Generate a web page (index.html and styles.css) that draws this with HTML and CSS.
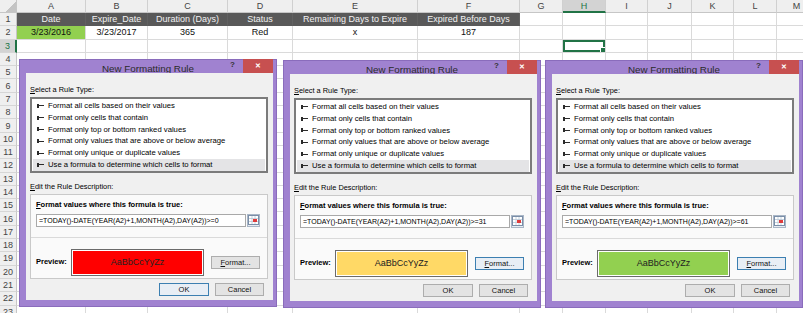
FILE: index.html
```html
<!DOCTYPE html>
<html lang="en">
<head>
<meta charset="UTF-8" />
<title>New Formatting Rule - Expiry Formulas</title>
<link rel="stylesheet" href="styles.css">
</head>
<body>

<div id="sheet" class="sheet"></div>

<div class="dialog d1">
  <div class="titlebar">
    <span></span>
    <span class="title">New Formatting Rule</span>
    <span class="controls"><span class="help">?</span><span class="close">&#x2715;</span></span>
  </div>
  <div class="body">
    <div class="label"><u>S</u>elect a Rule Type:</div>
    <ul class="rules">
      <li><i class="arrow"></i>Format all cells based on their values</li>
      <li><i class="arrow"></i>Format only cells that contain</li>
      <li><i class="arrow"></i>Format only top or bottom ranked values</li>
      <li><i class="arrow"></i>Format only values that are above or below average</li>
      <li><i class="arrow"></i>Format only unique or duplicate values</li>
      <li class="picked"><i class="arrow"></i>Use a formula to determine which cells to format</li>
    </ul>
    <div class="label label-edit"><u>E</u>dit the Rule Description:</div>
    <div class="group">
      <div class="group-top">
        <div class="bold"><u>F</u>ormat values where this formula is true:</div>
        <div class="formula-row">
          <div class="formula">=TODAY()-DATE(YEAR(A2)+1,MONTH(A2),DAY(A2))&gt;=0</div>
          <div class="ref-btn"><svg width="11" height="10" viewBox="0 0 11 10"><rect x=".5" y=".5" width="10" height="9" fill="#fff" stroke="#7a8ea8"/><path d="M1 3.5h9M1 6.5h9M4 1v8M7 1v8" stroke="#b9c6d6" stroke-width=".8"/><rect x="5" y="4" width="4" height="3" fill="#e03b3b"/></svg></div>
        </div>
      </div>
      <div class="preview-row">
        <span class="bold preview-label">Preview:</span>
        <div class="preview red">AaBbCcYyZz</div>
        <button class="btn"><u>F</u>ormat...</button>
      </div>
    </div>
    <div class="actions">
      <button class="btn ok focus">OK</button>
      <button class="btn cancel">Cancel</button>
    </div>
  </div>
</div>

<div class="dialog d2">
  <div class="titlebar">
    <span></span>
    <span class="title">New Formatting Rule</span>
    <span class="controls"><span class="help">?</span><span class="close">&#x2715;</span></span>
  </div>
  <div class="body">
    <div class="label"><u>S</u>elect a Rule Type:</div>
    <ul class="rules">
      <li><i class="arrow"></i>Format all cells based on their values</li>
      <li><i class="arrow"></i>Format only cells that contain</li>
      <li><i class="arrow"></i>Format only top or bottom ranked values</li>
      <li><i class="arrow"></i>Format only values that are above or below average</li>
      <li><i class="arrow"></i>Format only unique or duplicate values</li>
      <li class="picked"><i class="arrow"></i>Use a formula to determine which cells to format</li>
    </ul>
    <div class="label label-edit"><u>E</u>dit the Rule Description:</div>
    <div class="group">
      <div class="group-top">
        <div class="bold"><u>F</u>ormat values where this formula is true:</div>
        <div class="formula-row">
          <div class="formula">=TODAY()-DATE(YEAR(A2)+1,MONTH(A2),DAY(A2))&gt;=31</div>
          <div class="ref-btn"><svg width="11" height="10" viewBox="0 0 11 10"><rect x=".5" y=".5" width="10" height="9" fill="#fff" stroke="#7a8ea8"/><path d="M1 3.5h9M1 6.5h9M4 1v8M7 1v8" stroke="#b9c6d6" stroke-width=".8"/><rect x="5" y="4" width="4" height="3" fill="#e03b3b"/></svg></div>
        </div>
      </div>
      <div class="preview-row">
        <span class="bold preview-label">Preview:</span>
        <div class="preview yellow">AaBbCcYyZz</div>
        <button class="btn focus"><u>F</u>ormat...</button>
      </div>
    </div>
    <div class="actions">
      <button class="btn ok">OK</button>
      <button class="btn cancel">Cancel</button>
    </div>
  </div>
</div>

<div class="dialog d3">
  <div class="titlebar">
    <span></span>
    <span class="title">New Formatting Rule</span>
    <span class="controls"><span class="help">?</span><span class="close">&#x2715;</span></span>
  </div>
  <div class="body">
    <div class="label"><u>S</u>elect a Rule Type:</div>
    <ul class="rules">
      <li><i class="arrow"></i>Format all cells based on their values</li>
      <li><i class="arrow"></i>Format only cells that contain</li>
      <li><i class="arrow"></i>Format only top or bottom ranked values</li>
      <li><i class="arrow"></i>Format only values that are above or below average</li>
      <li><i class="arrow"></i>Format only unique or duplicate values</li>
      <li class="picked"><i class="arrow"></i>Use a formula to determine which cells to format</li>
    </ul>
    <div class="label label-edit"><u>E</u>dit the Rule Description:</div>
    <div class="group">
      <div class="group-top">
        <div class="bold"><u>F</u>ormat values where this formula is true:</div>
        <div class="formula-row">
          <div class="formula">=TODAY()-DATE(YEAR(A2)+1,MONTH(A2),DAY(A2))&gt;=61</div>
          <div class="ref-btn"><svg width="11" height="10" viewBox="0 0 11 10"><rect x=".5" y=".5" width="10" height="9" fill="#fff" stroke="#7a8ea8"/><path d="M1 3.5h9M1 6.5h9M4 1v8M7 1v8" stroke="#b9c6d6" stroke-width=".8"/><rect x="5" y="4" width="4" height="3" fill="#e03b3b"/></svg></div>
        </div>
      </div>
      <div class="preview-row">
        <span class="bold preview-label">Preview:</span>
        <div class="preview green">AaBbCcYyZz</div>
        <button class="btn focus"><u>F</u>ormat...</button>
      </div>
    </div>
    <div class="actions">
      <button class="btn ok">OK</button>
      <button class="btn cancel">Cancel</button>
    </div>
  </div>
</div>

<script>
  const sheet = document.getElementById('sheet');
  const letters = ['A','B','C','D','E','F','G','H','I','J','K','L','M'];
  const rowCount = 23;

  // rows 1 and 2 hold the only data on the sheet
  const data = {
    1: ['Date', 'Expire_Date', 'Duration (Days)', 'Status', 'Remaining Days to Expire', 'Expired Before Days'],
    2: ['3/23/2016', '3/23/2017', '365', 'Red', 'x', '187']
  };

  function addCell(cls, text) {
    const div = document.createElement('div');
    div.className = cls;
    if (text) div.textContent = text;
    sheet.appendChild(div);
  }

  addCell('corner');
  letters.forEach(l => addCell(l === 'H' ? 'colhead active' : 'colhead', l));

  for (let r = 1; r <= rowCount; r++) {
    addCell(r === 3 ? 'rownum active' : 'rownum', String(r));
    letters.forEach((l, i) => {
      let cls = 'cell';
      if (r === 1 && i < 6) cls += ' hdr';
      if (r === 2 && i === 0) cls += ' green-fill';
      if (r === 3 && l === 'H') cls += ' selected';
      const text = data[r] ? data[r][i] : '';
      addCell(cls, text);
    });
  }
</script>

</body>
</html>
```

FILE: styles.css
```css
html, body {
  margin: 0;
  overflow: hidden;
  background: #fff;
}

/* spreadsheet */
.sheet {
  display: grid;
  grid-template-columns: 17px 69px 62px 80px 65px 125px 102px 43px 43px 42px 44px 42px 43px 40px;
  grid-template-rows: 13px;
  grid-auto-rows: 13.3px;
  font-family: "Liberation Sans", Arial, sans-serif;
  font-size: 9px;
  color: #111;
  width: 817px;
}
.sheet > div {
  box-sizing: border-box;
  display: flex;
  align-items: center;
  justify-content: center;
  white-space: nowrap;
  overflow: hidden;
}
.corner {
  background: linear-gradient(135deg, #efefef 62%, #c4c4c4 62%);
  border-right: 1px solid #c6c6c6;
  border-bottom: 1px solid #c6c6c6;
}
.colhead {
  background: #efefef;
  color: #444;
  border-right: 1px solid #d0d0d0;
  border-bottom: 1px solid #c6c6c6;
}
.colhead.active {
  background: #d3d3d3;
  color: #217346;
  border-bottom: 2px solid #217346;
}
.rownum {
  background: #efefef;
  color: #444;
  border-right: 1px solid #c6c6c6;
  border-bottom: 1px solid #d6d6d6;
}
.rownum.active {
  background: #d3d3d3;
  color: #217346;
  border-right: 2px solid #217346;
}
.cell {
  border-right: 1px solid #dadada;
  border-bottom: 1px solid #dadada;
}
.cell.hdr {
  background: #595959;
  color: #f2f2f2;
  border-right-color: #616161;
  border-bottom-color: #595959;
}
.cell.green-fill {
  background: #92d050;
}
.cell.selected {
  position: relative;
  box-shadow: inset 0 0 0 2px #217346;
}
.cell.selected::after {
  content: "";
  position: absolute;
  right: -1px;
  bottom: -1px;
  width: 4px;
  height: 4px;
  background: #217346;
  border: 1px solid #fff;
}

/* dialogs */
.dialog {
  position: absolute;
  width: 258px;
  height: 248px;
  box-sizing: border-box;
  background: #a082d0;
  border: 1px solid #8a6cbc;
  display: flex;
  flex-direction: column;
  font-family: "Liberation Sans", Arial, sans-serif;
  font-size: 7.5px;
  color: #000;
}
.d1 { left: 19px; top: 59px; }
.d2 { left: 283px; top: 60px; }
.d3 { left: 545px; top: 60px; }

.titlebar {
  height: 13px;
  display: grid;
  grid-template-columns: 1fr auto 1fr;
  align-items: center;
}
.title {
  font-size: 9.8px;
  color: #2b2b2b;
  padding-top: 3px;
}
.controls {
  display: flex;
  justify-content: flex-end;
  align-self: start;
  margin-right: 3px;
  margin-top: -1px;
}
.help {
  font-weight: bold;
  font-size: 8px;
  color: #333;
  margin-right: 8px;
  padding-top: 1px;
}
.close {
  width: 30px;
  height: 14px;
  background: #c75050;
  color: #fff;
  font-size: 7px;
  font-weight: bold;
  display: flex;
  align-items: center;
  justify-content: center;
}

.body {
  flex: 1;
  margin: 0 3px 6px 6px;
  padding: 0 5px 0 4px;
  background: #f0f0f0;
  display: flex;
  flex-direction: column;
}
.label {
  height: 10px;
  line-height: 10px;
  margin-top: 12px;
  font-size: 7.4px;
}
.label-edit {
  margin-top: 9px;
}
u {
  text-decoration: underline;
}

.rules {
  list-style: none;
  margin: 2px 0 0;
  padding: 1px 1px 0;
  background: #fff;
  border: 2px solid #7b7b7b;
}
.rules li {
  height: 11.8px;
  line-height: 11.8px;
  padding-left: 4px;
  font-size: 7.7px;
  display: flex;
  align-items: center;
}
.rules li.picked {
  background: #e4e4e6;
}
.arrow {
  display: inline-block;
  width: 7px;
  height: 4px;
  margin-right: 4px;
  background:
    linear-gradient(#2b2b2b, #2b2b2b) 0 0 / 2px 4px no-repeat,
    linear-gradient(#2b2b2b, #2b2b2b) 2px 1.5px / 5px 1px no-repeat;
}

.group {
  margin-top: 2px;
  background: #fafafa;
  border: 1px solid #c9c9c9;
}
.group-top {
  padding: 5px 7px 10px 5px;
  border-bottom: 1px solid #dadada;
}
.bold {
  font-weight: bold;
  height: 10px;
  line-height: 10px;
}
.formula-row {
  display: flex;
  margin-top: 4px;
  height: 13px;
}
.formula {
  flex: 1;
  background: #fff;
  border: 1px solid #a9a9a9;
  font-size: 7px;
  line-height: 11px;
  padding-left: 2px;
  white-space: nowrap;
}
.ref-btn {
  width: 13px;
  margin-left: 1px;
  box-sizing: border-box;
  background: #e8edf3;
  border: 1px solid #a9b6c6;
  display: flex;
  align-items: center;
  justify-content: center;
}

.preview-row {
  display: flex;
  align-items: center;
  padding: 11px 7px 2px 5px;
}
.preview-label {
  width: 35px;
}
.preview {
  width: 133px;
  height: 27px;
  box-sizing: border-box;
  border: 1px solid #6b6b6b;
  box-shadow: inset 0 0 0 1px #fff;
  display: flex;
  align-items: center;
  justify-content: center;
  font-size: 9px;
  color: #222;
}
.preview.red { background: #ff0000; }
.preview.yellow { background: #ffd966; }
.preview.green { background: #92d050; }

.btn {
  height: 13px;
  width: 49px;
  margin-left: 7px;
  padding: 0;
  box-sizing: border-box;
  background: #e3e3e3;
  border: 1px solid #adadad;
  font-family: "Liberation Sans", Arial, sans-serif;
  font-size: 7.5px;
  color: #111;
  line-height: 11px;
}
.btn.focus {
  border-color: #3c7fb1;
  background: #e8eef5;
}
.actions {
  display: flex;
  justify-content: flex-end;
  margin-top: 4px;
  padding-right: 4px;
}
.actions .ok {
  width: 50px;
  margin-left: 0;
}
.actions .cancel {
  margin-left: 6px;
}
```
